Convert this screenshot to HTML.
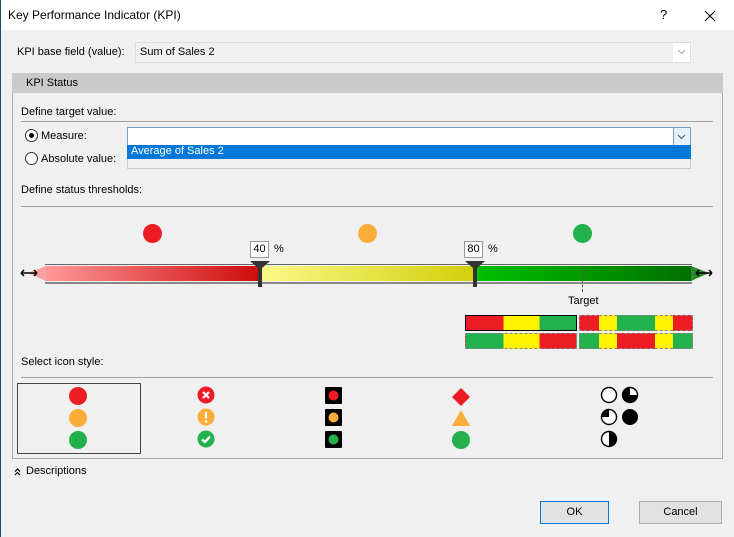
<!DOCTYPE html>
<html><head><meta charset="utf-8"><style>
*{margin:0;padding:0;box-sizing:border-box}
body{width:734px;height:537px;overflow:hidden;background:#f0f0f0;font-family:"Liberation Sans",sans-serif;font-size:11px;color:#000;position:relative}
.a{position:absolute;white-space:nowrap}
.c{position:absolute;border-radius:50%}
</style></head><body>
<div class="a" style="left:0;top:0;width:734px;height:30px;background:#fff"></div>
<div class="a" style="left:0;top:0;width:1px;height:537px;background:#1b4f72"></div>
<div class="a" style="left:8px;top:8px;font-size:12px">Key Performance Indicator (KPI)</div>
<div class="a" style="left:660px;top:7px;font-size:13px">?</div>
<svg class="a" style="left:704px;top:10px" width="12" height="12"><path d="M1 1L11 11M11 1L1 11" stroke="#000" stroke-width="1.1"/></svg>

<div class="a" style="left:17px;top:46px">KPI base field (value):</div>
<div class="a" style="left:135px;top:42px;width:556px;height:21px;border:1px solid #ddd;background:#f0f0f0"></div>
<div class="a" style="left:673px;top:43px;width:17px;height:19px;background:#fff"></div>
<svg class="a" style="left:677px;top:49px" width="9" height="6"><path d="M1 1L4.5 4.5L8 1" stroke="#aaa" fill="none"/></svg>
<div class="a" style="left:140px;top:46px">Sum of Sales 2</div>

<div class="a" style="left:12px;top:73px;width:711px;height:20px;background:#cacaca"></div>
<div class="a" style="left:26px;top:77px">KPI Status</div>
<div class="a" style="left:12px;top:93px;width:711px;height:366px;border:1px solid #a8a8a8;border-top:none"></div>

<div class="a" style="left:21px;top:106px">Define target value:</div>
<div class="a" style="left:21px;top:121px;width:692px;height:1px;background:#a0a0a0"></div>
<div class="c" style="left:25px;top:129px;width:13px;height:13px;border:1px solid #333;background:#fff"></div>
<div class="c" style="left:29px;top:133px;width:5px;height:5px;background:#000"></div>
<div class="a" style="left:41px;top:130px">Measure:</div>
<div class="c" style="left:25px;top:152px;width:13px;height:13px;border:1px solid #333;background:#fff"></div>
<div class="a" style="left:41px;top:153px">Absolute value:</div>
<div class="a" style="left:127px;top:151px;width:564px;height:18px;border:1px solid #ccc;background:#f0f0f0"></div>
<div class="a" style="left:127px;top:127px;width:564px;height:19px;border:1px solid #7a9cd3;background:#fff"></div>
<div class="a" style="left:673px;top:128px;width:17px;height:17px;background:#e5f1fb;border-left:1px solid #7a9cd3"></div>
<svg class="a" style="left:677px;top:134px" width="9" height="6"><path d="M1 1L4.5 4.5L8 1" stroke="#555" fill="none"/></svg>
<div class="a" style="left:127px;top:145px;width:564px;height:14px;background:#0078d7;color:#fff;padding-left:4px;line-height:13px">Average of Sales 2</div>

<div class="a" style="left:21px;top:184px">Define status thresholds:</div>
<div class="a" style="left:21px;top:206px;width:692px;height:1px;background:#a0a0a0"></div>

<div class="c" style="left:143px;top:224px;width:19px;height:19px;background:#ed1c24"></div>
<div class="c" style="left:358px;top:224px;width:19px;height:19px;background:#fbad39"></div>
<div class="c" style="left:573px;top:224px;width:19px;height:19px;background:#22b14c"></div>

<div class="a" style="left:250px;top:241px;width:19px;height:17px;border:1px solid #999;background:#fff;text-align:center;line-height:15px">40</div>
<div class="a" style="left:274px;top:243px">%</div>
<div class="a" style="left:464px;top:241px;width:19px;height:17px;border:1px solid #999;background:#fff;text-align:center;line-height:15px">80</div>
<div class="a" style="left:488px;top:243px">%</div>

<div class="a" style="left:45px;top:264px;width:647px;height:20px;border-top:1px solid #666;border-bottom:2px solid #888"></div>
<div class="a" style="left:45px;top:266px;width:213px;height:15px;background:linear-gradient(90deg,#f99,#ce0c0c)"></div>
<div class="a" style="left:260px;top:266px;width:215px;height:15px;background:linear-gradient(90deg,#fbf88a,#d2cf0a)"></div>
<div class="a" style="left:477px;top:266px;width:215px;height:15px;background:linear-gradient(90deg,#00c000,#007000)"></div>
<svg class="a" style="left:24px;top:264px" width="22" height="20"><path d="M22 2L4 9L22 17Z" fill="#f9a0a0"/></svg>
<svg class="a" style="left:691px;top:264px" width="22" height="20"><path d="M0 2L18 9L0 17Z" fill="#2a8a2a"/></svg>
<svg class="a" style="left:19px;top:268px" width="20" height="10"><path d="M2 5H18M2 5l3-3M2 5l3 3M18 5l-3-3M18 5l-3 3" stroke="#000" stroke-width="1.5" fill="none"/></svg>
<svg class="a" style="left:694px;top:268px" width="20" height="10"><path d="M2 5H18M2 5l3-3M2 5l3 3M18 5l-3-3M18 5l-3 3" stroke="#000" stroke-width="1.5" fill="none"/></svg>
<svg class="a" style="left:250px;top:260px" width="20" height="27"><path d="M0 1H20L12 8V27H8V8Z" fill="#333"/></svg>
<svg class="a" style="left:465px;top:260px" width="20" height="27"><path d="M0 1H20L12 8V27H8V8Z" fill="#333"/></svg>
<div class="a" style="left:582px;top:266px;width:1px;height:26px;border-left:1px dashed #555"></div>
<div class="a" style="left:568px;top:295px">Target</div>

<div class="a" style="left:465px;top:315px;width:112px;height:16px;border:1px solid #000;background:linear-gradient(90deg,#ed1c24 0 34%,#fff200 34% 67%,#22b14c 67%)"></div>
<div class="a" style="left:579px;top:315px;width:114px;height:16px;border:1px dashed #888;background:linear-gradient(90deg,#ed1c24 0 17%,#fff200 17% 33%,#22b14c 33% 67%,#fff200 67% 83%,#ed1c24 83%)"></div>
<div class="a" style="left:465px;top:333px;width:112px;height:16px;border:1px dashed #888;background:linear-gradient(90deg,#22b14c 0 34%,#fff200 34% 67%,#ed1c24 67%)"></div>
<div class="a" style="left:579px;top:333px;width:114px;height:16px;border:1px dashed #888;background:linear-gradient(90deg,#22b14c 0 17%,#fff200 17% 33%,#ed1c24 33% 67%,#fff200 67% 83%,#22b14c 83%)"></div>

<div class="a" style="left:21px;top:356px">Select icon style:</div>
<div class="a" style="left:21px;top:377px;width:692px;height:1px;background:#a0a0a0"></div>
<div class="a" style="left:17px;top:383px;width:124px;height:71px;border:1px solid #444"></div>

<div class="c" style="left:69px;top:387px;width:18px;height:18px;background:#ed1c24"></div>
<div class="c" style="left:69px;top:409px;width:18px;height:18px;background:#fbad39"></div>
<div class="c" style="left:69px;top:431px;width:18px;height:18px;background:#22b14c"></div>

<svg class="a" style="left:197px;top:386px" width="18" height="18"><circle cx="9" cy="9" r="8.5" fill="#ed1c24"/><path d="M6 6L12 12M12 6L6 12" stroke="#fff" stroke-width="2.2"/></svg>
<svg class="a" style="left:197px;top:408px" width="18" height="18"><circle cx="9" cy="9" r="8.5" fill="#fbad39"/><path d="M9 4V10.5" stroke="#fff" stroke-width="2.2"/><circle cx="9" cy="13.5" r="1.3" fill="#fff"/></svg>
<svg class="a" style="left:197px;top:430px" width="18" height="18"><circle cx="9" cy="9" r="8.5" fill="#22b14c"/><path d="M5 9.5L8 12L13 6.5" stroke="#fff" stroke-width="2.2" fill="none"/></svg>

<svg class="a" style="left:325px;top:387px" width="17" height="17"><rect width="17" height="17" rx="1" fill="#000"/><circle cx="8.5" cy="8.5" r="5" fill="#ed1c24"/></svg>
<svg class="a" style="left:325px;top:409px" width="17" height="17"><rect width="17" height="17" rx="1" fill="#000"/><circle cx="8.5" cy="8.5" r="5" fill="#fbad39"/></svg>
<svg class="a" style="left:325px;top:431px" width="17" height="17"><rect width="17" height="17" rx="1" fill="#000"/><circle cx="8.5" cy="8.5" r="5" fill="#22b14c"/></svg>

<svg class="a" style="left:451px;top:387px" width="20" height="20"><path d="M10 1L19 10L10 19L1 10Z" fill="#ed1c24"/></svg>
<svg class="a" style="left:451px;top:409px" width="20" height="18"><path d="M10 1L19 17H1Z" fill="#fbad39"/></svg>
<div class="c" style="left:452px;top:431px;width:18px;height:18px;background:#22b14c"></div>

<svg class="a" style="left:600px;top:386px" width="40" height="64">
<circle cx="9" cy="9" r="7.5" fill="#fff" stroke="#000" stroke-width="1.4"/>
<circle cx="30" cy="9" r="7.5" fill="#000" stroke="#000" stroke-width="1.4"/><path d="M30 9V2.2A6.8 6.8 0 0 1 36.8 9Z" fill="#fff"/>
<circle cx="9" cy="31" r="7.5" fill="#fff" stroke="#000" stroke-width="1.4"/><path d="M9 31V23.5A7.5 7.5 0 0 0 1.5 31Z" fill="#000"/>
<circle cx="30" cy="31" r="8" fill="#000"/>
<circle cx="9" cy="53" r="7.5" fill="#fff" stroke="#000" stroke-width="1.4"/><path d="M9 45.5A7.5 7.5 0 0 1 9 60.5Z" fill="#000"/>
</svg>

<svg class="a" style="left:14px;top:468px" width="7" height="8"><path d="M1 3.5L3.5 1L6 3.5M1 7L3.5 4.5L6 7" stroke="#000" stroke-width="1.2" fill="none"/></svg>
<div class="a" style="left:26px;top:465px">Descriptions</div>

<div class="a" style="left:540px;top:501px;width:69px;height:23px;border:1px solid #0078d7;background:#e1e1e1;text-align:center;line-height:21px">OK</div>
<div class="a" style="left:639px;top:501px;width:83px;height:23px;border:1px solid #adadad;background:#e1e1e1;text-align:center;line-height:21px">Cancel</div>
</body></html>
